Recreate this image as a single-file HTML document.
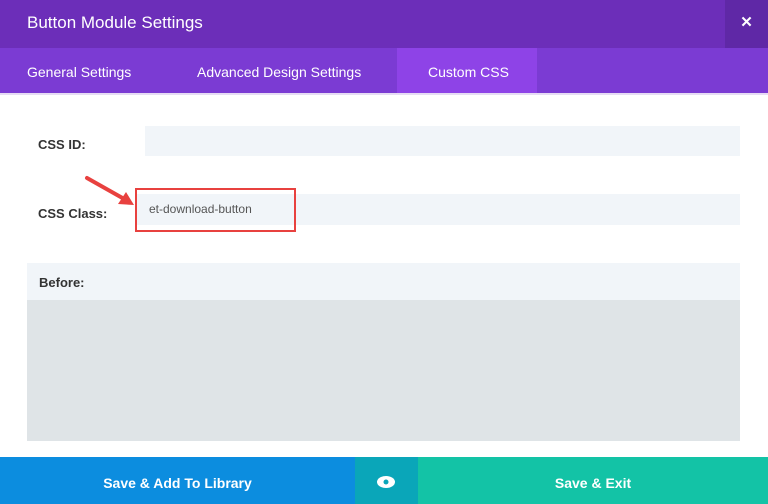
<!DOCTYPE html>
<html><head><style>
body{margin:0;width:768px;height:504px;overflow:hidden;background:#fff;font-family:"Liberation Sans",sans-serif;position:relative}
div{position:absolute;box-sizing:border-box}
.t{color:#fff}
.lbl{font-size:13px;color:#333;font-weight:bold}
</style></head><body>
<div style="left:0;top:0;width:768px;height:48px;background:#6c2eb9"></div>
<div class="t" style="left:27px;top:13px;font-size:17px">Button Module Settings</div>
<div style="left:725px;top:0;width:43px;height:48px;background:#5f28a6;color:#fff;font-size:15px;font-weight:bold;text-align:center;line-height:46px">✕</div>
<div style="left:0;top:48px;width:768px;height:45px;background:#7b3bd3"></div>
<div style="left:397px;top:48px;width:140px;height:45px;background:#8e43e7"></div>
<div class="t" style="left:27px;top:64px;font-size:14px">General Settings</div>
<div class="t" style="left:197px;top:64px;font-size:14px">Advanced Design Settings</div>
<div class="t" style="left:428px;top:64px;font-size:14px">Custom CSS</div>
<div style="left:0;top:93px;width:768px;height:2px;background:#e6dcf4"></div>
<div class="lbl" style="left:38px;top:137px">CSS ID:</div>
<div style="left:145px;top:126px;width:595px;height:30px;background:#f1f5f9"></div>
<div class="lbl" style="left:38px;top:206px">CSS Class:</div>
<div style="left:135px;top:194px;width:605px;height:31px;background:#f1f5f9"></div>
<div style="left:135px;top:188px;width:161px;height:44px;border:2px solid #e8413f"></div>
<div style="left:149px;top:202px;font-size:12px;color:#555">et-download-button</div>
<svg style="position:absolute;left:80px;top:170px" width="60" height="45"><line x1="7" y1="8" x2="46" y2="30" stroke="#e8413f" stroke-width="4" stroke-linecap="round"/><polygon points="54,35 38,34 46,22" fill="#e8413f"/></svg>
<div style="left:27px;top:263px;width:713px;height:37px;background:#f1f5f9"></div>
<div class="lbl" style="left:39px;top:275px">Before:</div>
<div style="left:27px;top:300px;width:713px;height:141px;background:#dfe4e7"></div>
<div style="left:0;top:457px;width:355px;height:47px;background:#0c8ddf"></div>
<div style="left:355px;top:457px;width:63px;height:47px;background:#0aa6b9"></div>
<div style="left:418px;top:457px;width:350px;height:47px;background:#13c3a6"></div>
<div class="t" style="left:0;top:475px;width:355px;text-align:center;font-size:14px;font-weight:bold">Save &amp; Add To Library</div>
<div class="t" style="left:418px;top:475px;width:350px;text-align:center;font-size:14px;font-weight:bold">Save &amp; Exit</div>
<svg style="position:absolute;left:376px;top:475px" width="20" height="14"><ellipse cx="10" cy="7" rx="9" ry="6" fill="#fff"/><circle cx="10" cy="7" r="2.5" fill="#0aa6b9"/></svg>
</body></html>
